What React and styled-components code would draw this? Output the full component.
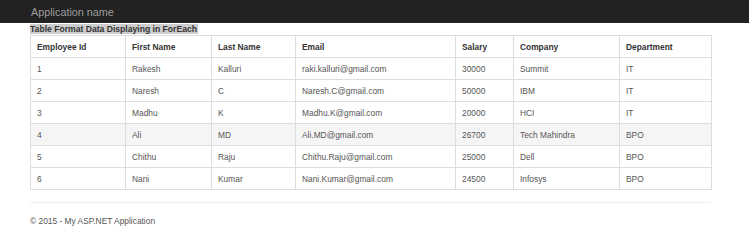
import styled, { createGlobalStyle } from "styled-components";

const GlobalStyle = createGlobalStyle`
    body {
        margin: 0;
        background: #fff;
        font-family: "Liberation Sans", Arial, sans-serif;
        color: #333;
    }
`;

const Navbar = styled.div`
    height: 23px;
    background: #222;
    padding: 2px 0 0 31px;
    box-sizing: border-box;
`;

const Brand = styled.span`
    font-size: 10.8px;
    color: #9d9d9d;
`;

const Container = styled.div`
    width: 681px;
    margin-left: 30px;
`;

const Caption = styled.div`
    width: fit-content;
    margin-top: 1px;
    padding-right: 1px;
    background: #cdcdcd;
    font-size: 8.6px;
    font-weight: bold;
    line-height: 10px;
    height: 10px;
    color: #333;
    margin-bottom: 1px;
`;

const Table = styled.table`
    width: 681px;
    table-layout: fixed;
    border-collapse: collapse;
    border: 1px solid #ddd;
    font-size: 8.4px;
`;

const Cell = styled.td`
    height: 22px;
    padding: 0 6px;
    border: 1px solid #ddd;
    box-sizing: border-box;
    vertical-align: middle;
    text-align: left;
    white-space: nowrap;
    color: #555;
`;

const HeadCell = styled(Cell).attrs({ as: "th" })`
    font-weight: bold;
    color: #333;
`;

const Row = styled.tr`
    background: ${(p) => (p.$hover ? "#f5f5f5" : "#fff")};
`;

const Rule = styled.hr`
    margin: 12px 0 0;
    border: 0;
    border-top: 1px solid #eee;
`;

const Footer = styled.footer`
    margin-top: 13px;
    font-size: 8.4px;
    color: #555;
`;

const columns = [
    { label: "Employee Id", width: 95 },
    { label: "First Name", width: 86 },
    { label: "Last Name", width: 84 },
    { label: "Email", width: 160 },
    { label: "Salary", width: 58 },
    { label: "Company", width: 106 },
    { label: "Department", width: 92 },
];

const employees = [
    ["1", "Rakesh", "Kalluri", "raki.kalluri@gmail.com", "30000", "Summit", "IT"],
    ["2", "Naresh", "C", "Naresh.C@gmail.com", "50000", "IBM", "IT"],
    ["3", "Madhu", "K", "Madhu.K@gmail.com", "20000", "HCI", "IT"],
    ["4", "Ali", "MD", "Ali.MD@gmail.com", "26700", "Tech Mahindra", "BPO"],
    ["5", "Chithu", "Raju", "Chithu.Raju@gmail.com", "25000", "Dell", "BPO"],
    ["6", "Nani", "Kumar", "Nani.Kumar@gmail.com", "24500", "Infosys", "BPO"],
];

const App = () => {
    return (
        <>
            <GlobalStyle />
            <Navbar>
                <Brand>Application name</Brand>
            </Navbar>
            <Container>
                <Caption>Table Format Data Displaying in ForEach</Caption>
                <Table>
                    <colgroup>
                        {columns.map((c) => (
                            <col key={c.label} style={{ width: c.width }} />
                        ))}
                    </colgroup>
                    <thead>
                        <Row>
                            {columns.map((c) => (
                                <HeadCell key={c.label}>{c.label}</HeadCell>
                            ))}
                        </Row>
                    </thead>
                    <tbody>
                        {employees.map((row) => (
                            <Row key={row[0]} $hover={row[0] === "4"}>
                                {row.map((value, i) => (
                                    <Cell key={i}>{value}</Cell>
                                ))}
                            </Row>
                        ))}
                    </tbody>
                </Table>
                <Rule />
                <Footer>© 2015 - My ASP.NET Application</Footer>
            </Container>
        </>
    );
};

export default App;
